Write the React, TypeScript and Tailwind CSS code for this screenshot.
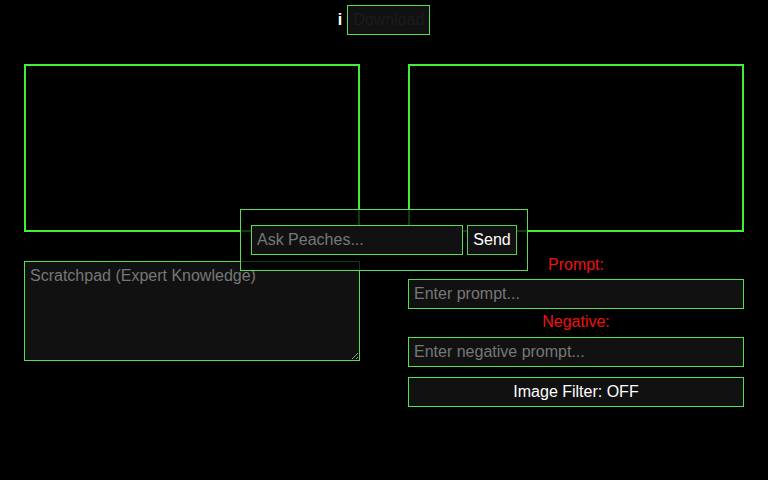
export default function App() {
  return (
    <div
      className="relative w-[768px] h-[480px] bg-black overflow-hidden"
      style={{ fontFamily: '"Liberation Sans", Arial, sans-serif' }}
    >
      <div className="flex justify-center items-center pt-[5px] gap-[5px]">
        <span className="text-white font-bold text-[16px] leading-[18px]">i</span>
        <button className="h-[30px] px-[5px] border border-[#55dd55] bg-[#111] text-[#1c1c1c] text-[16px]">
          Download
        </button>
      </div>

      <div className="flex gap-[48px] px-[24px] mt-[29px]">
        <div className="w-[336px] h-[168px] border-2 border-[#44ee33]" />
        <div className="w-[336px] h-[168px] border-2 border-[#44ee33]" />
      </div>

      <div className="flex items-start gap-[48px] px-[24px] mt-[24px]">
        <textarea
          placeholder="Scratchpad (Expert Knowledge)"
          className="mt-[5px] w-[336px] h-[100px] border border-[#55dd55] bg-[#111] text-white placeholder-[#777] text-[16px] px-[5px] pt-[2px] pb-[5px] outline-none"
        />
        <div className="w-[336px] flex flex-col">
          <div className="text-center text-[#ee1111] text-[16px] leading-[18px] h-[18px]">Prompt:</div>
          <input
            placeholder="Enter prompt..."
            className="mt-[5px] h-[30px] w-full border border-[#55dd55] bg-[#111] text-white placeholder-[#777] text-[16px] px-[5px] outline-none"
          />
          <div className="mt-[4px] text-center text-[#ee1111] text-[16px] leading-[18px] h-[18px]">Negative:</div>
          <input
            placeholder="Enter negative prompt..."
            className="mt-[6px] h-[30px] w-full border border-[#55dd55] bg-[#111] text-white placeholder-[#777] text-[16px] px-[5px] outline-none"
          />
          <button className="mt-[10px] h-[30px] w-full border border-[#55dd55] bg-[#111] text-white text-[16px]">
            Image Filter: OFF
          </button>
        </div>
      </div>

      <div className="absolute left-[240px] top-[209px] w-[288px] h-[62px] border border-[#55dd55] bg-[rgba(0,0,0,0.75)] flex items-center px-[10px] gap-[4px]">
        <input
          placeholder="Ask Peaches..."
          className="w-[212px] h-[30px] border border-[#55dd55] bg-[#111] text-white placeholder-[#777] text-[16px] px-[5px] outline-none"
        />
        <button className="w-[50px] h-[30px] border border-[#55cc55] bg-[#111] text-white text-[16px]">
          Send
        </button>
      </div>
    </div>
  );
}
